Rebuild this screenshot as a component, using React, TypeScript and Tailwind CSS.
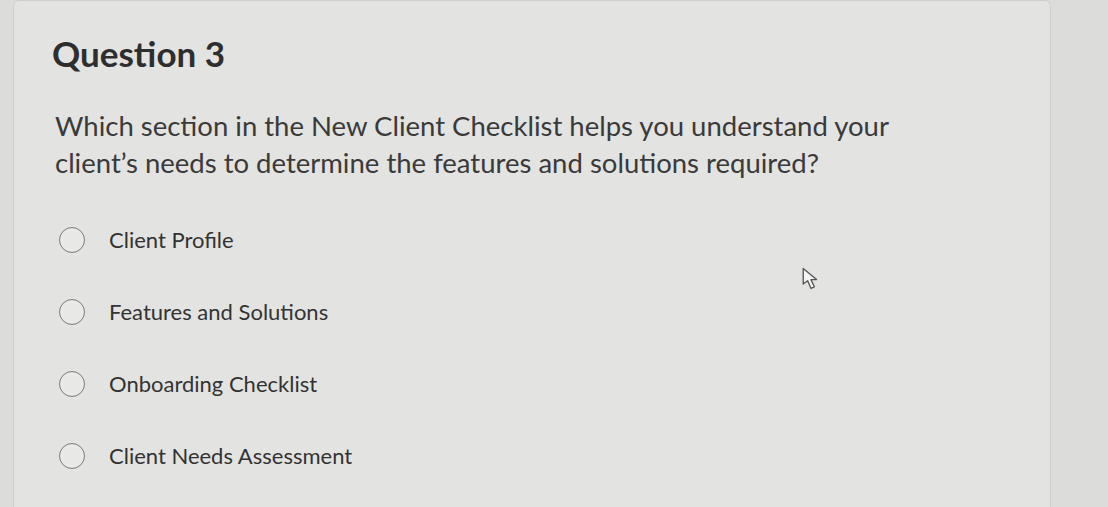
import React from 'react';

const options = [
  'Client Profile',
  'Features and Solutions',
  'Onboarding Checklist',
  'Client Needs Assessment',
];

const Cursor: React.FC = () => (
  <svg width="20" height="25" viewBox="0 0 18 22" className="absolute left-[801px] top-[266px]">
    <path
      d="M2 2 L2 16 L6 13 L9 20 L12 18.5 L9 12 L14 12 Z"
      fill="#f4f4f4"
      stroke="#555"
      strokeWidth="1.2"
      strokeLinejoin="round"
    />
  </svg>
);

const App: React.FC = () => {
  return (
    <div className="relative w-full h-[507px] bg-[#dcdcda] overflow-hidden font-['Lato',sans-serif]">
      <div className="ml-[13px] w-[1038px] h-full bg-[#e3e3e1] border-l border-t border-r border-[#cfcfcd] rounded-tl-md rounded-tr-md pl-[38px] pt-[30px]">
        <h2 className="text-[35px] font-bold text-[#2e2e2e] leading-[44px]">Question 3</h2>
        <p className="mt-[32px] text-[27.5px] leading-[37px] text-[#3a3a3a] pl-[3px]">
          Which section in the New Client Checklist helps you understand your
          <br />
          client’s needs to determine the features and solutions required?
        </p>
        <div className="mt-[46px] flex flex-col gap-[46px] pl-[7px]">
          {options.map((label) => (
            <label key={label} className="flex items-center gap-[24px] h-[26px]">
              <span className="w-[26px] h-[26px] rounded-full border-[1.5px] border-[#7a7a7a] bg-[#e8e8e6]" />
              <span className="text-[22px] text-[#333] leading-[26px]">{label}</span>
            </label>
          ))}
        </div>
      </div>
      <Cursor />
    </div>
  );
};

export default App;
